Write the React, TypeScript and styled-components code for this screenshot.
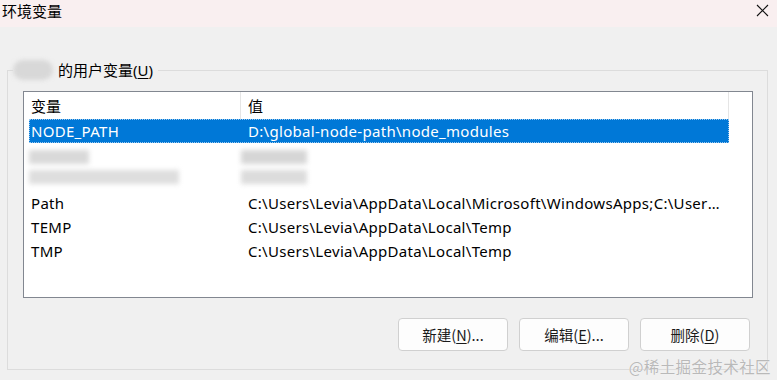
import React from "react";
import styled, { createGlobalStyle } from "styled-components";

const Global = createGlobalStyle`
  html, body { margin: 0; padding: 0; background: #f0f0f0; }
  body { font-family: "Noto Sans", "Noto Sans CJK SC", sans-serif; color: #000; }
  * { box-sizing: border-box; }
`;

const Window = styled.div`
  position: relative;
  width: 777px;
  height: 380px;
  background: #f0f0f0;
  display: flex;
  flex-direction: column;
  overflow: hidden;
`;

const TitleBar = styled.div`
  height: 27px;
  flex: none;
  background: #f9eff0;
  display: flex;
  align-items: center;
  justify-content: space-between;
  padding: 0 8px 6px 2px;
`;

const Title = styled.div`
  font-family: "Noto Sans CJK SC", sans-serif;
  font-size: 15px;
  line-height: 20px;
`;

const Content = styled.div`
  padding: 32px 9px 0 7px;
`;

const GroupBox = styled.fieldset`
  margin: 0;
  border: 1px solid #dcdcdc;
  padding: 10px 14px 18px 15px;
  height: 311px;
  min-width: 0;
`;

const Legend = styled.legend`
  margin-left: -10px;
  padding: 0 5px 0 0;
  display: flex;
  align-items: center;
  font-family: "Noto Sans", "Noto Sans CJK SC", sans-serif;
  font-size: 15px;
  line-height: 22px;
`;

const BlurName = styled.span`
  display: inline-block;
  width: 40px;
  height: 20px;
  margin-right: 5px;
  border-radius: 10px;
  background: #d8d8d8;
  filter: blur(2px);
`;

const Accel = styled.span`
  text-decoration: underline;
  text-underline-offset: 2px;
`;

const ListView = styled.div`
  height: 207px;
  border: 1px solid #828790;
  background: #fff;
  display: flex;
  flex-direction: column;
`;

const Header = styled.div`
  display: grid;
  grid-template-columns: 217px 488px;
  height: 27px;
  flex: none;
`;

const HeaderCell = styled.div`
  font-family: "Noto Sans CJK SC", sans-serif;
  font-size: 15px;
  padding-left: 7px;
  display: flex;
  align-items: center;
  border-right: 1px solid #e5e5e5;
`;

const Rows = styled.div`
  padding-left: 5px;
  display: flex;
  flex-direction: column;
`;

const Row = styled.div<{ $selected?: boolean }>`
  width: 700px;
  height: 24px;
  display: grid;
  grid-template-columns: 212px 488px;
  align-items: center;
  font-size: 15px;
  letter-spacing: 0.3px;
  background: ${(p) => (p.$selected ? "#0078d7" : "transparent")};
  color: ${(p) => (p.$selected ? "#fff" : "#000")};
  outline: ${(p) => (p.$selected ? "1px dotted #9ac8ee" : "none")};
  outline-offset: -1px;
`;

const Cell = styled.div<{ $pad: number }>`
  padding-left: ${(p) => p.$pad}px;
  white-space: nowrap;
  overflow: hidden;
  text-overflow: ellipsis;
  padding-right: 8px;
`;

const BlurRow = styled.div`
  height: 48px;
  display: grid;
  grid-template-columns: 212px 100px;
  align-items: center;
  filter: blur(2.5px);
`;

const BlurBlock = styled.div<{ $w: number }>`
  width: ${(p) => p.$w}px;
  height: 40px;
  display: flex;
  flex-direction: column;
  gap: 6px;
  justify-content: center;
`;

const BlurLine = styled.div<{ $w: number; $shade: string }>`
  width: ${(p) => p.$w}px;
  height: 14px;
  background: ${(p) => p.$shade};
`;

const ButtonRow = styled.div`
  display: flex;
  justify-content: flex-end;
  gap: 11px;
  margin-top: 20px;
  padding-right: 3px;
`;

const Button = styled.button`
  width: 110px;
  height: 33px;
  background: #fdfdfd;
  border: 1px solid #d0d0d0;
  border-radius: 4px;
  font-family: "Noto Sans CJK SC", "Noto Sans", sans-serif;
  font-size: 14.5px;
  color: #1a1a1a;
  padding: 0;
`;

const Watermark = styled.div`
  position: absolute;
  right: 6px;
  bottom: 5px;
  font-family: "Noto Sans CJK SC", sans-serif;
  font-size: 15.5px;
  line-height: 18px;
  color: #b9b9b9;
  letter-spacing: 0.4px;
  text-shadow: 0 0 1px #fff;
`;

const rows = [
  { name: "Path", value: "C:\\Users\\Levia\\AppData\\Local\\Microsoft\\WindowsApps;C:\\Users\\Levia\\AppData" },
  { name: "TEMP", value: "C:\\Users\\Levia\\AppData\\Local\\Temp" },
  { name: "TMP", value: "C:\\Users\\Levia\\AppData\\Local\\Temp" },
];

const CloseIcon = () => (
  <svg width="13" height="13" viewBox="0 0 13 13">
    <path d="M1 1 L12 12 M12 1 L1 12" stroke="#111" strokeWidth="1.1" fill="none" />
  </svg>
);

export default function App() {
  return (
    <Window>
      <Global />
      <TitleBar>
        <Title>环境变量</Title>
        <CloseIcon />
      </TitleBar>
      <Content>
        <GroupBox>
          <Legend>
            <BlurName />
            <span>
              的用户变量(<Accel>U</Accel>)
            </span>
          </Legend>
          <ListView>
            <Header>
              <HeaderCell>变量</HeaderCell>
              <HeaderCell>值</HeaderCell>
            </Header>
            <Rows>
              <Row $selected>
                <Cell $pad={2}>NODE_PATH</Cell>
                <Cell $pad={7}>D:\global-node-path\node_modules</Cell>
              </Row>
              <BlurRow>
                <BlurBlock $w={150}>
                  <BlurLine $w={60} $shade="#d9d9d9" />
                  <BlurLine $w={150} $shade="#dedede" />
                </BlurBlock>
                <BlurBlock $w={66}>
                  <BlurLine $w={66} $shade="#d6d6d6" />
                  <BlurLine $w={66} $shade="#dcdcdc" />
                </BlurBlock>
              </BlurRow>
              {rows.map((r) => (
                <Row key={r.name}>
                  <Cell $pad={2}>{r.name}</Cell>
                  <Cell $pad={7}>{r.value}</Cell>
                </Row>
              ))}
            </Rows>
          </ListView>
          <ButtonRow>
            <Button>
              新建(<Accel>N</Accel>)...
            </Button>
            <Button>
              编辑(<Accel>E</Accel>)...
            </Button>
            <Button>
              删除(<Accel>D</Accel>)
            </Button>
          </ButtonRow>
        </GroupBox>
      </Content>
      <Watermark>@稀土掘金技术社区</Watermark>
    </Window>
  );
}
